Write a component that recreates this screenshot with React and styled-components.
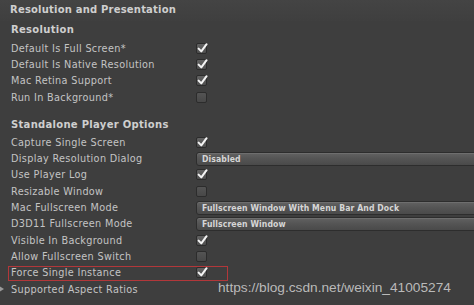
import React from "react";
import styled, { createGlobalStyle } from "styled-components";

const Global = createGlobalStyle`
  html, body { margin: 0; padding: 0; background: #3e3e3e; }
  body { width: 474px; height: 305px; overflow: hidden; }
`;

const Panel = styled.div`
  position: relative;
  width: 474px;
  height: 305px;
  overflow: hidden;
  background: #3e3e3e;
  font-family: "DejaVu Sans", Verdana, sans-serif;
  color: #c6c6c6;
`;

const Header = styled.div`
  height: 21px;
  display: flex;
  align-items: center;
  padding-left: 10px;
  padding-bottom: 2px;
  box-sizing: border-box;
  font-size: 10px;
  font-weight: bold;
  letter-spacing: 0.2px;
  color: #cfcfcf;
  background: linear-gradient(#444444, #3f3f3f);
`;

const SectionTitle = styled.div`
  height: 16px;
  display: flex;
  align-items: center;
  padding-left: 11px;
  margin-top: ${(p) => p.$top || 0}px;
  margin-bottom: ${(p) => p.$bottom || 0}px;
  font-size: 10px;
  font-weight: bold;
  letter-spacing: 0.3px;
  color: #cfcfcf;
`;

const Row = styled.div`
  position: relative;
  height: 16.3px;
  display: flex;
  align-items: center;
  padding-left: 11px;
  ${(p) =>
    p.$highlight &&
    `
    &::after {
      content: "";
      position: absolute;
      left: 8px;
      top: 1.5px;
      width: 220px;
      height: 15px;
      box-sizing: border-box;
      border: 1px solid #b2373a;
      pointer-events: none;
    }
  `}
`;

const Label = styled.div`
  width: 185px;
  flex: none;
  font-size: 9.7px;
  letter-spacing: 0.33px;
  white-space: nowrap;
  color: #c4c4c4;
`;

const Control = styled.div`
  flex: 1;
  display: flex;
  align-items: center;
  min-width: 0;
`;

const Box = styled.div`
  position: relative;
  width: 11px;
  height: 11px;
  box-sizing: border-box;
  border-radius: 2px;
  border: 1px solid #2c2c2c;
  background: ${(p) =>
    p.$checked
      ? "linear-gradient(#626262, #4e4e4e)"
      : "linear-gradient(#545454, #484848)"};
  svg {
    position: absolute;
    left: 0px;
    top: -2px;
  }
`;

const Checkbox = ({ checked }) => (
  <Box $checked={checked}>
    {checked && (
      <svg width="12" height="12" viewBox="0 0 12 12">
        <path
          d="M1.6 6.6 L4.3 9.4 L9.6 2.2"
          fill="none"
          stroke="#f4f4f4"
          strokeWidth="2"
          strokeLinecap="round"
          strokeLinejoin="round"
        />
      </svg>
    )}
  </Box>
);

const Dropdown = styled.div`
  height: 14px;
  width: 290px;
  flex: none;
  box-sizing: border-box;
  border: 1px solid #2d2d2d;
  border-radius: 3px;
  background: linear-gradient(#626262 0%, #555555 45%, #4a4a4a 100%);
  box-shadow: inset 0 1px 0 #6e6e6e;
  display: flex;
  align-items: center;
  padding-left: 5px;
  font-family: "DejaVu Sans Condensed", "DejaVu Sans", sans-serif;
  font-size: 8.6px;
  font-weight: bold;
  letter-spacing: 0.1px;
  color: #d6d6d6;
  white-space: nowrap;
`;

const Foldout = styled.div`
  position: absolute;
  left: -1px;
  top: 286px;
  width: 0;
  height: 0;
  border-top: 3.5px solid transparent;
  border-bottom: 3.5px solid transparent;
  border-left: 5px solid #9a9a9a;
`;

const Watermark = styled.div`
  position: absolute;
  left: 218px;
  top: 280px;
  font-family: "Liberation Sans", Arial, sans-serif;
  font-size: 13.7px;
  color: rgba(210, 210, 210, 0.85);
  white-space: nowrap;
  pointer-events: none;
`;

const resolutionRows = [
  { label: "Default Is Full Screen*", checked: true },
  { label: "Default Is Native Resolution", checked: true },
  { label: "Mac Retina Support", checked: true },
  { label: "Run In Background*", checked: false },
];

const standaloneRows = [
  { label: "Capture Single Screen", checked: true },
  { label: "Display Resolution Dialog", dropdown: "Disabled" },
  { label: "Use Player Log", checked: true },
  { label: "Resizable Window", checked: false },
  { label: "Mac Fullscreen Mode", dropdown: "Fullscreen Window With Menu Bar And Dock" },
  { label: "D3D11 Fullscreen Mode", dropdown: "Fullscreen Window" },
  { label: "Visible In Background", checked: true },
  { label: "Allow Fullscreen Switch", checked: false },
  { label: "Force Single Instance", checked: true, highlight: true },
  { label: "Supported Aspect Ratios", empty: true },
];

const SettingRow = ({ row }) => (
  <Row $highlight={row.highlight}>
    <Label>{row.label}</Label>
    <Control>
      {row.dropdown ? (
        <Dropdown>{row.dropdown}</Dropdown>
      ) : row.empty ? null : (
        <Checkbox checked={row.checked} />
      )}
    </Control>
  </Row>
);

export default function App() {
  return (
    <Panel>
      <Global />
      <Header>Resolution and Presentation</Header>
      <SectionTitle $bottom={3}>Resolution</SectionTitle>
      {resolutionRows.map((r) => (
        <SettingRow key={r.label} row={r} />
      ))}
      <SectionTitle $top={11} $bottom={2}>Standalone Player Options</SectionTitle>
      {standaloneRows.map((r) => (
        <SettingRow key={r.label} row={r} />
      ))}
      <Foldout />
      <Watermark>https://blog.csdn.net/weixin_41005274</Watermark>
    </Panel>
  );
}
